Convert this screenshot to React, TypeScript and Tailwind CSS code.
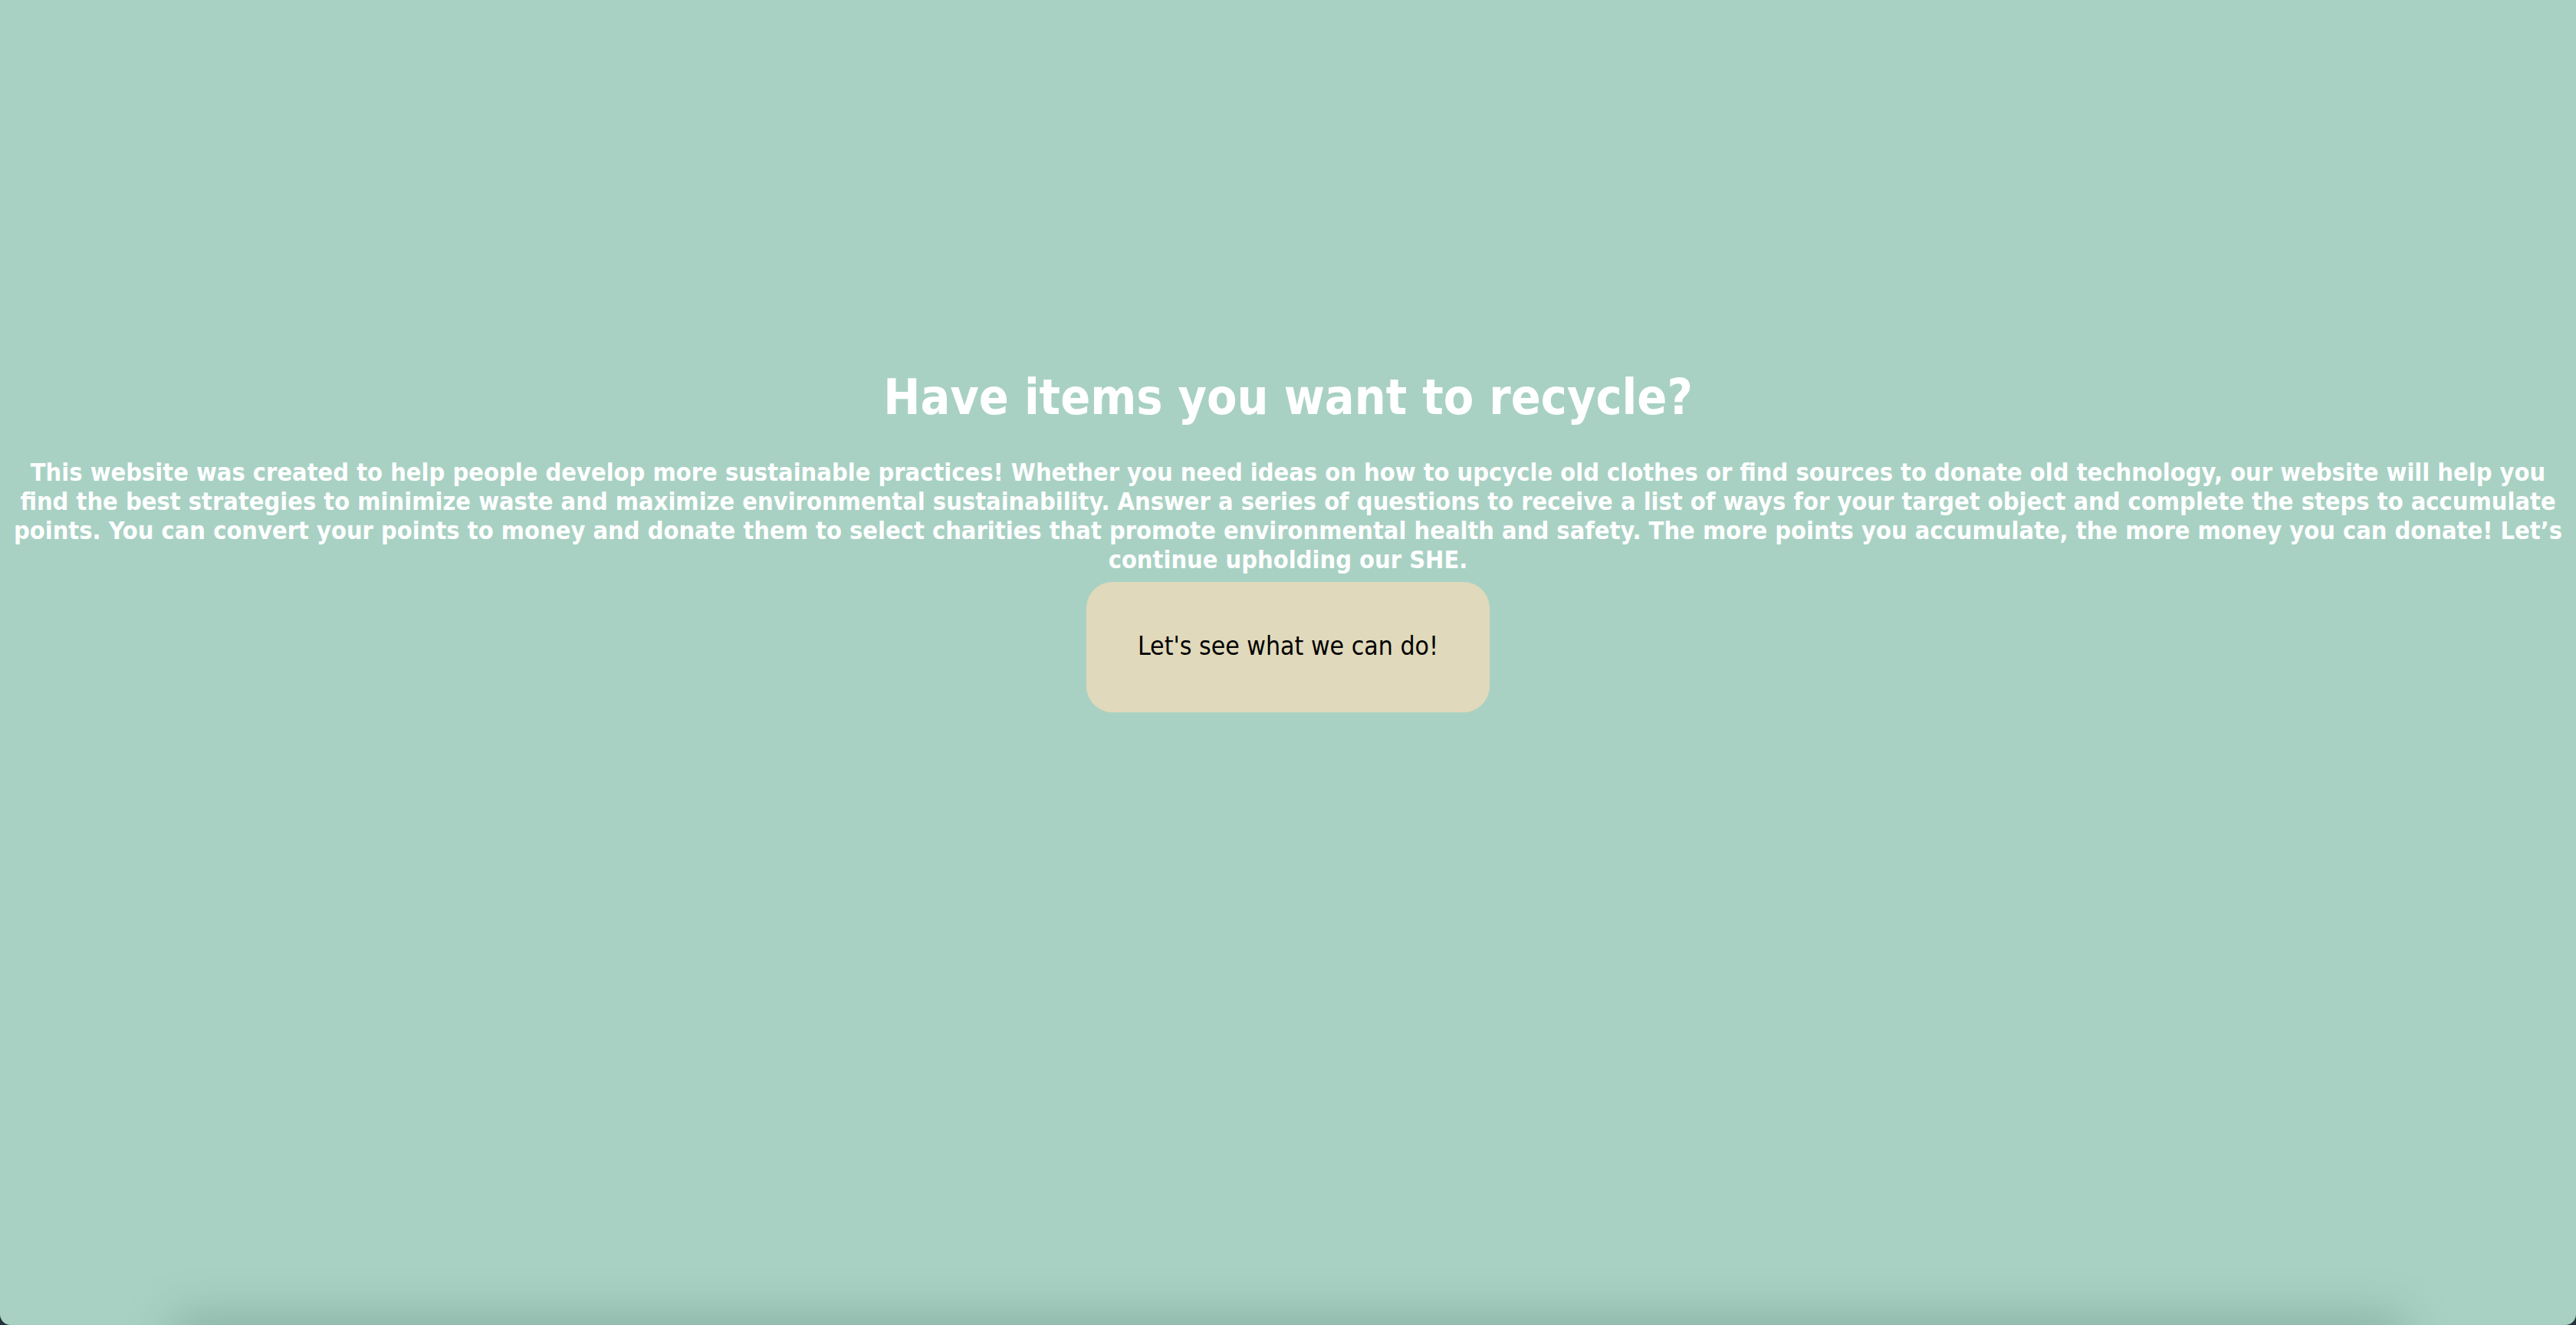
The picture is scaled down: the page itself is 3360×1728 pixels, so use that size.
export default function App() {
  return (
    <div className="h-[1728px] w-full overflow-hidden bg-[#22313a]">
      <main className="relative flex h-full w-full flex-col items-center overflow-hidden rounded-b-[14px] bg-[#a8d1c3] px-3 pt-[481px] font-['DejaVu_Sans_Condensed','DejaVu_Sans',sans-serif]">
        <h1 className="mb-[41px] text-center text-[64px] leading-[74.5px] font-bold text-white">
          Have items you want to recycle?
        </h1>
        <p className="mb-[10px] text-center text-[32.3px] leading-[38px] font-bold text-white">
          This website was created to help people develop more sustainable practices! Whether you need ideas on how to
          upcycle old clothes or find sources to donate old technology, our website will help you find the best
          strategies to minimize waste and maximize environmental sustainability. Answer a series of questions to
          receive a list of ways for your target object and complete the steps to accumulate points. You can convert
          your points to money and donate them to select charities that promote environmental health and safety. The
          more points you accumulate, the more money you can donate! Let’s continue upholding our SHE.
        </p>
        <button
          type="button"
          className="flex h-[170px] w-[526px] items-center justify-center rounded-[34px] bg-[#e1d9bb] text-[33.5px] text-black"
        >
          Let's see what we can do!
        </button>
        <div className="pointer-events-none absolute inset-x-[220px] -bottom-[40px] h-[50px] rounded-full bg-[rgba(50,90,78,0.3)] blur-[30px]" />
      </main>
    </div>
  );
}
